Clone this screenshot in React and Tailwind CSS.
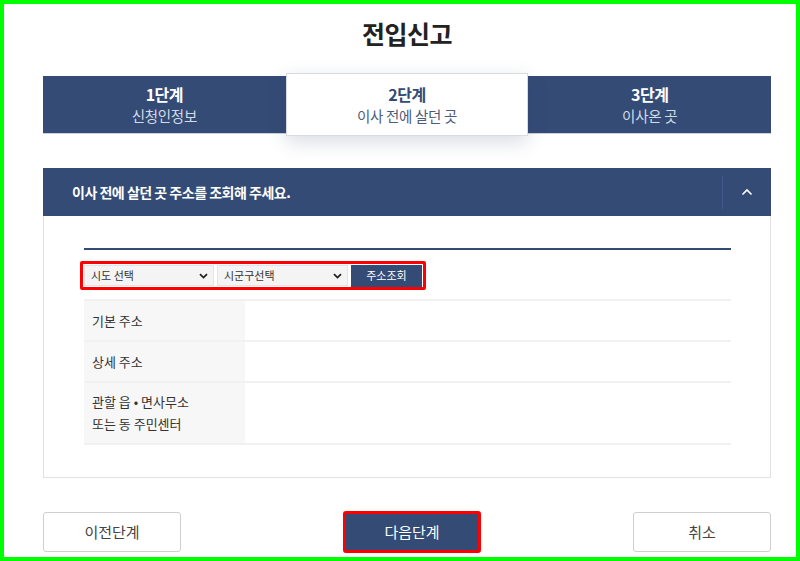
import React from "react";

const NAVY = "bg-[#344b76]";

function Chevron() {
  return (
    <svg width="9" height="6" viewBox="0 0 9 6" className="shrink-0">
      <path d="M1 1.2 L4.5 4.6 L8 1.2" fill="none" stroke="#222" strokeWidth="1.8" />
    </svg>
  );
}

export default function App() {
  return (
    <div
      className="w-[800px] h-[561px] box-border border-[4px] border-[#00ff00] bg-white overflow-hidden flex flex-col pl-[39px] pr-[25px]"
      style={{ fontFamily: '"Noto Sans CJK KR", "Noto Sans", sans-serif' }}
    >
      {/* Title */}
      <h1 className="mt-[14px] text-center text-[25px] leading-[30px] font-bold text-[#222] tracking-[-0.5px]">
        전입신고
      </h1>

      {/* Steps */}
      <div className={`mt-[28px] h-[58px] grid grid-cols-3 ${NAVY} border-b border-[#c9d1e0]`}>
        <div className="flex flex-col items-center justify-center text-white">
          <span className="text-[16px] leading-[22px] font-bold tracking-[-0.5px]">1단계</span>
          <span className="text-[14.5px] leading-[22px] text-[#d3dae7] tracking-[-0.3px]">신청인정보</span>
        </div>
        <div className="relative -mt-[3px] -mb-[3px] z-10 bg-white border border-[#d6dbe6] shadow-[0_6px_18px_rgba(40,60,100,0.18)] flex flex-col items-center justify-center">
          <span className="text-[16px] leading-[22px] font-bold text-[#344b76] tracking-[-0.5px]">2단계</span>
          <span className="text-[14.5px] leading-[22px] text-[#4d5b78] tracking-[-0.3px]">이사 전에 살던 곳</span>
        </div>
        <div className="flex flex-col items-center justify-center text-white">
          <span className="text-[16px] leading-[22px] font-bold tracking-[-0.5px]">3단계</span>
          <span className="text-[14.5px] leading-[22px] text-[#d3dae7] tracking-[-0.3px]">이사온 곳</span>
        </div>
      </div>

      {/* Panel */}
      <div className="mt-[34px] h-[310px] border border-[#e2e2e2] border-t-0 flex flex-col">
        <div className={`h-[48px] ${NAVY} flex items-center pl-[29px] -mx-px`}>
          <span className="flex-1 text-white text-[14px] font-bold tracking-[-0.5px]">
            이사 전에 살던 곳 주소를 조회해 주세요.
          </span>
          <div className="w-px h-[33px] bg-[#46598a]" />
          <div className="w-[48px] flex items-center justify-center">
            <svg width="12" height="8" viewBox="0 0 12 8">
              <path d="M1.5 6.5 L6 2 L10.5 6.5" fill="none" stroke="#fff" strokeWidth="1.6" />
            </svg>
          </div>
        </div>

        <div className="pl-[40px] pr-[39px] pt-[32px]">
          <div className="h-[2px] bg-[#344b76]" />

          {/* Search row */}
          <div className="mt-[11px] -ml-[4px] w-[346px] h-[29px] border-[3px] border-[#ff0000] rounded-[2px] flex items-center pl-px pr-[1px] gap-[3px]">
            <div className="w-[130px] h-[21px] bg-[#f4f4f4] border border-[#e4e4e4] flex items-center justify-between pl-[6px] pr-[5px]">
              <span className="text-[11px] text-[#333]">시도 선택</span>
              <Chevron />
            </div>
            <div className="w-[131px] h-[21px] bg-[#f4f4f4] border border-[#e4e4e4] flex items-center justify-between pl-[6px] pr-[5px]">
              <span className="text-[11px] text-[#333]">시군구선택</span>
              <Chevron />
            </div>
            <div className={`flex-1 h-[22px] ${NAVY} flex items-center justify-center`}>
              <span className="text-[11px] text-white">주소조회</span>
            </div>
          </div>

          {/* Table */}
          <div className="mt-[9px] border-t-2 border-[#f1f1f1]">
            <div className="flex h-[41px] border-b-2 border-[#f1f1f1]">
              <div className="w-[161px] bg-[#f7f7f7] flex items-center pl-[8px] text-[13px] text-[#333]">기본 주소</div>
              <div className="flex-1" />
            </div>
            <div className="flex h-[41px] border-b-2 border-[#f1f1f1]">
              <div className="w-[161px] bg-[#f7f7f7] flex items-center pl-[8px] text-[13px] text-[#333]">상세 주소</div>
              <div className="flex-1" />
            </div>
            <div className="flex h-[62px] border-b-2 border-[#f1f1f1]">
              <div className="w-[161px] bg-[#f7f7f7] flex flex-col justify-center pl-[8px] text-[13px] leading-[22px] text-[#333]">
                <span>관할 읍 • 면사무소</span>
                <span>또는 동 주민센터</span>
              </div>
              <div className="flex-1" />
            </div>
          </div>
        </div>
      </div>

      {/* Buttons */}
      <div className="mt-[33px] flex items-center">
        <button className="w-[138px] h-[40px] bg-white border border-[#cfcfcf] rounded-[3px] text-[15px] text-[#444]">
          이전단계
        </button>
        <button className={`ml-[162px] w-[138px] h-[42px] ${NAVY} border-[3px] border-[#ff0000] rounded-[3px] text-[15px] text-white`}>
          다음단계
        </button>
        <button className="ml-[152px] w-[138px] h-[40px] bg-white border border-[#cfcfcf] rounded-[3px] text-[15px] text-[#444]">
          취소
        </button>
      </div>
    </div>
  );
}
